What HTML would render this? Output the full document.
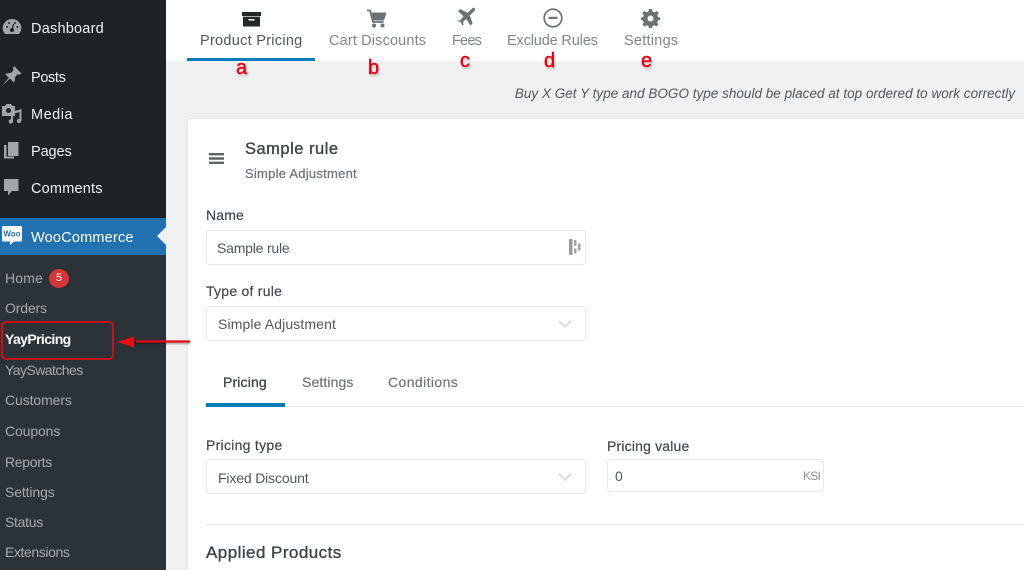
<!DOCTYPE html>
<html><head><meta charset="utf-8"><style>
html,body{margin:0;padding:0}
body{width:1024px;height:570px;overflow:hidden;background:#f0f0f1;position:relative;font-family:"Liberation Sans",sans-serif}
.t{position:absolute;white-space:nowrap;line-height:20px;height:20px}
.b{position:absolute;box-sizing:border-box}
.m{font-size:14.5px;color:#f0f0f1}
.s{font-size:14px;color:#a7aaad;left:5px}
.n{font-size:14.5px;color:#80868b}
.l{font-size:14px;color:#3c434a;left:206px;-webkit-text-stroke:.15px #3c434a}
.r{position:absolute;color:#e8000f;font-size:20px;line-height:20px;text-shadow:0 0 2px #fff,1px 2px 2px rgba(0,0,0,.3);-webkit-text-stroke:.45px #e8000f}
svg{position:absolute;overflow:visible}
</style></head><body>
<div class="b" style="left:0;top:0;width:166px;height:570px;background:#1d2327"></div>
<div class="b" style="left:0;top:218px;width:166px;height:37px;background:#2271b1"></div>
<div class="b" style="left:0;top:255px;width:166px;height:315px;background:#2c3338"></div>
<svg style="left:157px;top:227px" width="9" height="18"><path d="M9 0L0 9L9 18Z" fill="#f0f0f1"/></svg>

<svg style="left:2px;top:18px" width="20" height="18" viewBox="0 0 20 18"><path d="M10 1A9 9 0 0 0 3 16H17A9 9 0 0 0 10 1Z" fill="#a2a5a9"/><circle cx="10" cy="12" r="2" fill="#1d2327"/><path d="M10 12L11.5 6" stroke="#1d2327" stroke-width="1.3"/><circle cx="5" cy="9" r="1" fill="#1d2327"/><circle cx="7" cy="5" r="1" fill="#1d2327"/><circle cx="13" cy="5" r="1" fill="#1d2327"/><circle cx="15.500" cy="9" r="1" fill="#1d2327"/></svg>
<div class="t m" style="left:31px;top:19px;letter-spacing:.22px">Dashboard</div>
<svg style="left:2px;top:66px" width="20" height="20" viewBox="0 0 20 20"><path d="M12 0L19.500 7.500L17.500 8.800L15.500 8.300L12.800 11.500C13.300 13.500 12.800 15 11.800 16.500L8 12.500L.5 19.500L6.800 11.500L3.300 8.500C4.800 7.300 6.500 6.800 8.500 7.300L11.500 4.500L11 2Z" fill="#a2a5a9"/></svg>
<div class="t m" style="left:31px;top:68px;letter-spacing:-.35px">Posts</div>
<svg style="left:1px;top:103px" width="21" height="21" viewBox="0 0 21 21"><path d="M1 3H4L5.500 1H10L11.500 3H14V13H1Z" fill="#a2a5a9"/><circle cx="7.500" cy="7.500" r="2.500" fill="#1d2327"/><path d="M19 6.500L20.500 6V18H18.500V9L12 11V18.500H10V9Z" fill="#a2a5a9"/><circle cx="9.800" cy="18.500" r="2.100" fill="#a2a5a9"/><circle cx="18" cy="18" r="2.100" fill="#a2a5a9"/></svg>
<div class="t m" style="left:31px;top:105px;letter-spacing:.5px">Media</div>
<svg style="left:3px;top:141px" width="16" height="18" viewBox="0 0 16 18"><path d="M5 1H15.500V15H5Z" fill="#a2a5a9"/><path d="M1 4H3.500V15.500H11V17.500H1Z" fill="#a2a5a9"/></svg>
<div class="t m" style="left:31px;top:142px;letter-spacing:-.1px">Pages</div>
<svg style="left:3px;top:178px" width="16" height="18" viewBox="0 0 16 18"><path d="M1 1H15.500V13H9L5 17.500V13H1Z" fill="#a2a5a9"/></svg>
<div class="t m" style="left:31px;top:179px;letter-spacing:.2px">Comments</div>

<svg style="left:1px;top:225px" width="21" height="22" viewBox="0 0 21 22"><path d="M2.500 1H19.500Q21 1 21 2.500V15Q21 16.500 19.500 16.500H13L9 20V16.500H2.500Q1 16.500 1 15V2.500Q1 1 2.500 1Z" fill="#fff"/><text x="11" y="11.500" text-anchor="middle" font-family="Liberation Sans" font-size="8" font-weight="700" fill="#2271b1">Woo</text></svg>
<div class="t" style="left:31px;top:228px;font-size:14.5px;color:#fff;letter-spacing:.2px">WooCommerce</div>
<div class="t s" style="top:268px;letter-spacing:.2px">Home</div>
<div class="b" style="left:49px;top:269px;width:20px;height:19px;border-radius:50%;background:#d63638;color:#fff;font-size:11px;line-height:19px;text-align:center">5</div>
<div class="t s" style="top:298px;letter-spacing:-.15px">Orders</div>
<div class="t s" style="top:329px;color:#fff;font-weight:700;letter-spacing:-.6px">YayPricing</div>
<div class="t s" style="top:360px;letter-spacing:-.55px">YaySwatches</div>
<div class="t s" style="top:390px;letter-spacing:-.1px">Customers</div>
<div class="t s" style="top:421px;letter-spacing:-.12px">Coupons</div>
<div class="t s" style="top:452px;letter-spacing:-.3px">Reports</div>
<div class="t s" style="top:482px;letter-spacing:-.12px">Settings</div>
<div class="t s" style="top:512px;letter-spacing:-.3px">Status</div>
<div class="t s" style="top:542px;letter-spacing:-.4px">Extensions</div>
<div class="b" style="left:1px;top:321px;width:113px;height:39px;border:2px solid #c9111b;border-radius:5px"></div>

<div class="b" style="left:166px;top:0;width:858px;height:61px;background:#fff"></div>
<div class="b" style="left:187px;top:58px;width:128px;height:3px;background:#007cba"></div>

<svg style="left:241px;top:11px" width="20" height="16" viewBox="0 0 20 16"><path d="M1 1H20V5H1Z" fill="#23282d"/><path d="M2 5.600H19V15.500H2Z" fill="#23282d"/><path d="M7.500 8H13.500V9.500H7.500Z" fill="#fff"/></svg>
<div class="t" style="left:200px;top:31px;font-size:14.500px;color:#50575e;letter-spacing:.28px">Product Pricing</div>
<svg style="left:366px;top:9px" width="21" height="20" viewBox="0 0 21 20"><path d="M1 1.500H4L7 13H17.500" fill="none" stroke="#6c7176" stroke-width="1.800"/><path d="M5.500 3.500H20.500L18 11.500H7.200Z" fill="#6c7176"/><circle cx="8" cy="16.500" r="2" fill="#6c7176"/><circle cx="16.500" cy="16.500" r="2" fill="#6c7176"/></svg>
<div class="t n" style="left:329px;top:31px;letter-spacing:.15px">Cart Discounts</div>
<svg style="left:457px;top:8px" width="19" height="18" viewBox="0 0 19 18"><path d="M16.500 1.500L5 12.500" stroke="#6c7176" stroke-width="3.400" stroke-linecap="round"/><path d="M1 2.800L3.200 1.200L10 4.500L13.500 9L15.500 15.500L13.500 17.500L9 10.500L6 8Z" fill="#6c7176"/><path d="M.5 12.500L6 12.500L6.500 17.500L5 17L4 14L1 13.500Z" fill="#6c7176"/></svg>
<div class="t n" style="left:452px;top:31px;letter-spacing:-.8px">Fees</div>
<svg style="left:543px;top:8px" width="20" height="20" viewBox="0 0 20 20"><circle cx="10" cy="10" r="8.800" fill="none" stroke="#6c7176" stroke-width="1.700"/><path d="M5.500 8.800H14.500V11H5.500Z" fill="#6c7176"/></svg>
<div class="t n" style="left:507px;top:31px;letter-spacing:-.15px">Exclude Rules</div>
<svg style="left:641px;top:9px" width="19" height="19" viewBox="0 0 19 19"><path d="M8 0H11L11.500 2.500L13.500 3.400L15.700 2L17.700 4L16.300 6.200L17 8L19 8.500V11L17 11.500L16.200 13.500L17.500 15.500L15.500 17.500L13.500 16.200L11.500 17L11 19H8L7.500 17L5.500 16.200L3.500 17.500L1.500 15.500L2.800 13.500L2 11.500L0 11V8.500L2 8L2.700 6.200L1.300 4L3.300 2L5.500 3.400L7.500 2.500Z" fill="#6c7176"/><circle cx="9.500" cy="9.500" r="3" fill="#fff"/></svg>
<div class="t n" style="left:624px;top:31px;letter-spacing:.25px">Settings</div>

<div class="r" style="left:236px;top:58px">a</div>
<div class="r" style="left:368px;top:58px">b</div>
<div class="r" style="left:460px;top:51px">c</div>
<div class="r" style="left:544px;top:51px">d</div>
<div class="r" style="left:641px;top:51px">e</div>

<div class="t" style="right:9px;top:84px;font-size:13.500px;font-style:italic;color:#50575e;letter-spacing:.02px">Buy X Get Y type and BOGO type should be placed at top ordered to work correctly</div>

<div class="b" style="left:187px;top:118px;width:837px;height:452px;background:#fff;border:1px solid #e8e8e8;border-right:0;border-bottom:0;border-radius:4px 0 0 0"></div>
<svg style="left:116px;top:332px;z-index:5" width="76" height="20"><path d="M18 9.500H74" stroke="#000" stroke-opacity=".25" stroke-width="3" transform="translate(0,1.500)"/><path d="M20 9.500H74" stroke="#ea0a12" stroke-width="2.200"/><path d="M1 10L18 4.500V15.500Z" fill="#ea0a12"/></svg>
<svg style="left:209px;top:153px" width="15" height="11"><path d="M0 1.200H15M0 5.500H15M0 9.800H15" stroke="#5f6468" stroke-width="2.400"/></svg>
<div class="t" style="left:245px;top:139px;font-size:16.500px;color:#3c434a;-webkit-text-stroke:.35px #3c434a;letter-spacing:.5px">Sample rule</div>
<div class="t" style="left:245px;top:164px;font-size:13px;color:#70757a;-webkit-text-stroke:.25px #70757a;letter-spacing:.25px">Simple Adjustment</div>

<div class="t l" style="top:205px;letter-spacing:.15px">Name</div>
<div class="b" style="left:206px;top:230px;width:380px;height:35px;border:1px solid #e6e8eb;border-radius:4px"></div>
<div class="t" style="left:217px;top:238px;font-size:14px;color:#50575e;letter-spacing:-.2px">Sample rule</div>
<svg style="left:569px;top:239px" width="12" height="16"><path d="M0 0H3.500V16H0Z" fill="#9a9a9a"/><path d="M5 1H7.500V7H5ZM5 9.500H7.500V14.500H5Z" fill="#a5a5a5"/><path d="M9 4.500H11.500V11.500H9Z" fill="#a5a5a5"/></svg>

<div class="t l" style="top:281px;letter-spacing:.25px">Type of rule</div>
<div class="b" style="left:206px;top:306px;width:380px;height:35px;border:1px solid #e6e8eb;border-radius:4px"></div>
<div class="t" style="left:218px;top:314px;font-size:14px;color:#50575e;letter-spacing:.12px">Simple Adjustment</div>
<svg style="left:558px;top:320px" width="14" height="8"><path d="M1 1L7 6.500L13 1" fill="none" stroke="#dadce3" stroke-width="2.200"/></svg>

<div class="b" style="left:206px;top:406px;width:818px;height:1px;background:#e8e8e8"></div>
<div class="b" style="left:206px;top:403px;width:79px;height:3.500px;background:#007cba"></div>
<div class="t" style="left:223px;top:372px;font-size:14px;color:#3c434a;-webkit-text-stroke:.3px #3c434a;letter-spacing:.15px">Pricing</div>
<div class="t" style="left:302px;top:372px;font-size:14px;color:#70757a;-webkit-text-stroke:.2px #70757a;letter-spacing:.12px">Settings</div>
<div class="t" style="left:388px;top:372px;font-size:14px;color:#70757a;-webkit-text-stroke:.2px #70757a;letter-spacing:.4px">Conditions</div>

<div class="t l" style="top:435px;letter-spacing:.28px">Pricing type</div>
<div class="b" style="left:206px;top:459px;width:380px;height:35px;border:1px solid #e6e8eb;border-radius:4px"></div>
<div class="t" style="left:218px;top:468px;font-size:14px;color:#50575e;letter-spacing:-.15px">Fixed Discount</div>
<svg style="left:558px;top:473px" width="14" height="8"><path d="M1 1L7 6.500L13 1" fill="none" stroke="#dadce3" stroke-width="2.200"/></svg>
<div class="t l" style="left:607px;top:436px;letter-spacing:.18px">Pricing value</div>
<div class="b" style="left:607px;top:459px;width:217px;height:33px;border:1px solid #e6e8eb;border-radius:4px"></div>
<div class="t" style="left:615px;top:466px;font-size:14px;color:#50575e">0</div>
<div class="t" style="left:803px;top:466px;width:17px;overflow:hidden;font-size:12px;letter-spacing:-.7px;color:#8a8f94">KSH</div>

<div class="b" style="left:206px;top:524px;width:818px;height:1px;background:#e8e8e8"></div>
<div class="t" style="left:206px;top:543px;font-size:17px;color:#3c434a;-webkit-text-stroke:.35px #3c434a;letter-spacing:.45px">Applied Products</div>
</body></html>
